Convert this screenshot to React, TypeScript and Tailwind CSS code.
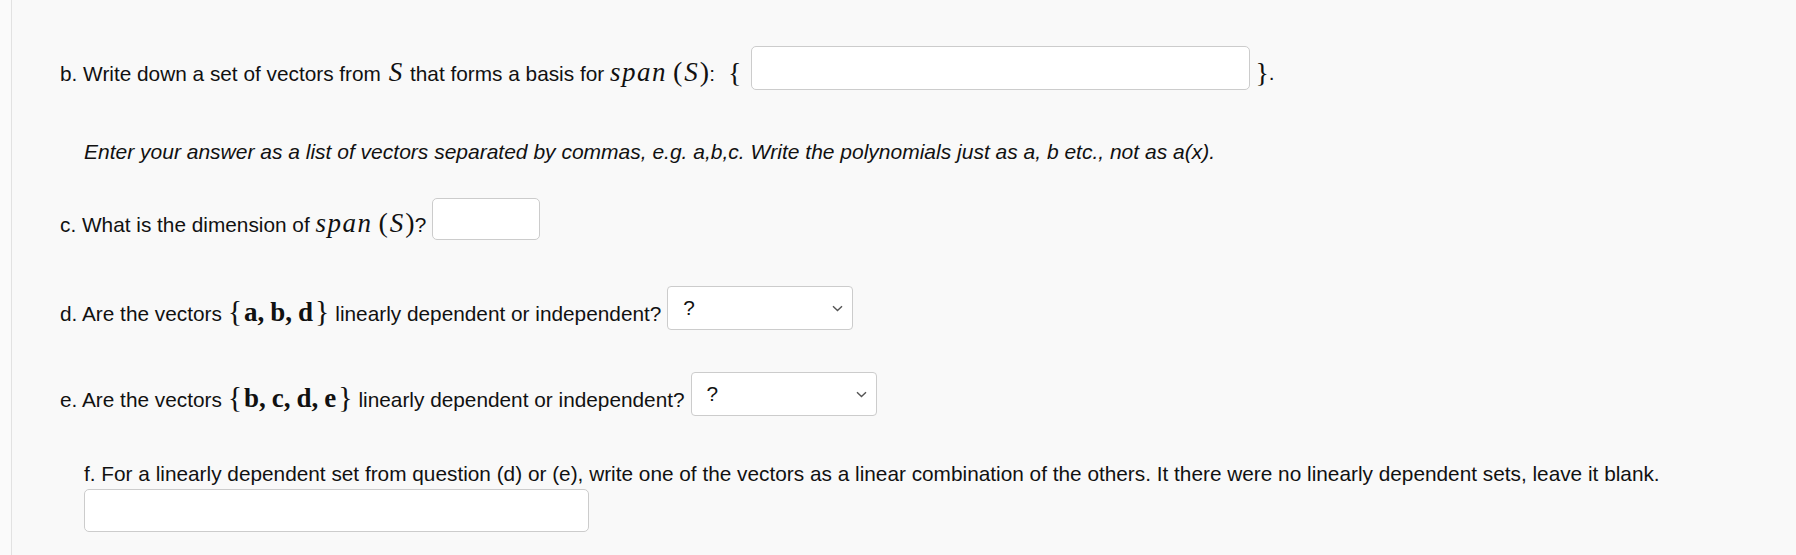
import React from 'react';

const serif = "font-['Liberation_Serif','DejaVu_Serif',serif]";

function MathVar({ children }: { children: React.ReactNode }) {
  return <span className={`${serif} mx-[2px] italic text-[27px] leading-[24px]`}>{children}</span>;
}

function SpanS() {
  return (
    <span className={`${serif} text-[27px] leading-[24px]`}>
      <span className="italic tracking-[1.5px]">span</span>
      <span className="ml-[6px] text-[28px]">(</span>
      <span className="px-[2px] italic">S</span>
      <span className="text-[28px]">)</span>
    </span>
  );
}

function VectorSet({ items }: { items: string[] }) {
  return (
    <span className={`${serif} text-[27px] leading-[24px]`}>
      <span className="mr-[2px] text-[30px]">{'{'}</span>
      {items.map((v, i) => (
        <span key={v} className="font-bold">
          {v}
          {i < items.length - 1 && <span className="mr-[6px]">,</span>}
        </span>
      ))}
      <span className="ml-[2px] text-[30px]">{'}'}</span>
    </span>
  );
}

function Select({ width }: { width: string }) {
  return (
    <div
      className={`ml-[6px] flex h-[44px] ${width} items-center justify-between rounded-[4px] border border-[#cccccc] bg-white pl-[15px] pr-[9px]`}
    >
      <span className="leading-[24px]">?</span>
      <svg width="11" height="7" viewBox="0 0 11 7" fill="none" stroke="#555" strokeWidth="1.4">
        <path d="M1 1.2 5.5 5.6 10 1.2" />
      </svg>
    </div>
  );
}

export default function App() {
  return (
    <div className="min-h-[555px] bg-[#fafafa] font-['Liberation_Sans',Arial,sans-serif] text-[20.8px] text-[#111]">
      <div className="ml-[11px] min-h-[555px] border-l border-[#e2e2e2] bg-[#f9f9f9] pl-[48px] pt-[46px]">
        {/* b */}
        <div className="flex h-[44px] items-center whitespace-nowrap">
          <span className="mt-[10px] leading-[24px]">
            b. Write down a set of vectors from <MathVar>S</MathVar> that forms a basis for <SpanS />:
          </span>
          <span className={`${serif} ml-[13px] mt-[10px] text-[28px] leading-[24px]`}>{'{'}</span>
          <input className="ml-[10px] h-[44px] w-[499px] rounded-[5px] border border-[#cccccc] bg-white" />
          <span className={`${serif} ml-[5px] mt-[10px] text-[28px] leading-[24px]`}>{'}'}</span>
          <span className="mt-[10px] leading-[24px]">.</span>
        </div>

        <p className="ml-[24px] mt-[50px] text-[21px] italic leading-[24px] whitespace-nowrap">
          Enter your answer as a list of vectors separated by commas, e.g. a,b,c. Write the polynomials just as a, b etc., not as a(x).
        </p>

        {/* c */}
        <div className="mt-[34px] flex h-[42px] items-center whitespace-nowrap">
          <span className="mt-[10px] leading-[24px]">
            c. What is the dimension of <SpanS />?
          </span>
          <input className="ml-[6px] h-[42px] w-[108px] rounded-[5px] border border-[#cccccc] bg-white" />
        </div>

        {/* d */}
        <div className="mt-[46px] flex h-[44px] items-center whitespace-nowrap">
          <span className="mt-[9px] leading-[24px]">
            d. Are the vectors <VectorSet items={['a', 'b', 'd']} /> linearly dependent or independent?
          </span>
          <Select width="w-[186px]" />
        </div>

        {/* e */}
        <div className="mt-[42px] flex h-[44px] items-center whitespace-nowrap">
          <span className="mt-[9px] leading-[24px]">
            e. Are the vectors <VectorSet items={['b', 'c', 'd', 'e']} /> linearly dependent or independent?
          </span>
          <Select width="w-[186px]" />
        </div>

        {/* f */}
        <div className="ml-[24px] mt-[46px]">
          <p className="leading-[24px] whitespace-nowrap">
            f. For a linearly dependent set from question (d) or (e), write one of the vectors as a linear combination of the others. It there were no linearly dependent sets, leave it blank.
          </p>
          <input className="mt-[3px] block h-[43px] w-[505px] rounded-[5px] border border-[#cccccc] bg-white" />
        </div>
      </div>
    </div>
  );
}
